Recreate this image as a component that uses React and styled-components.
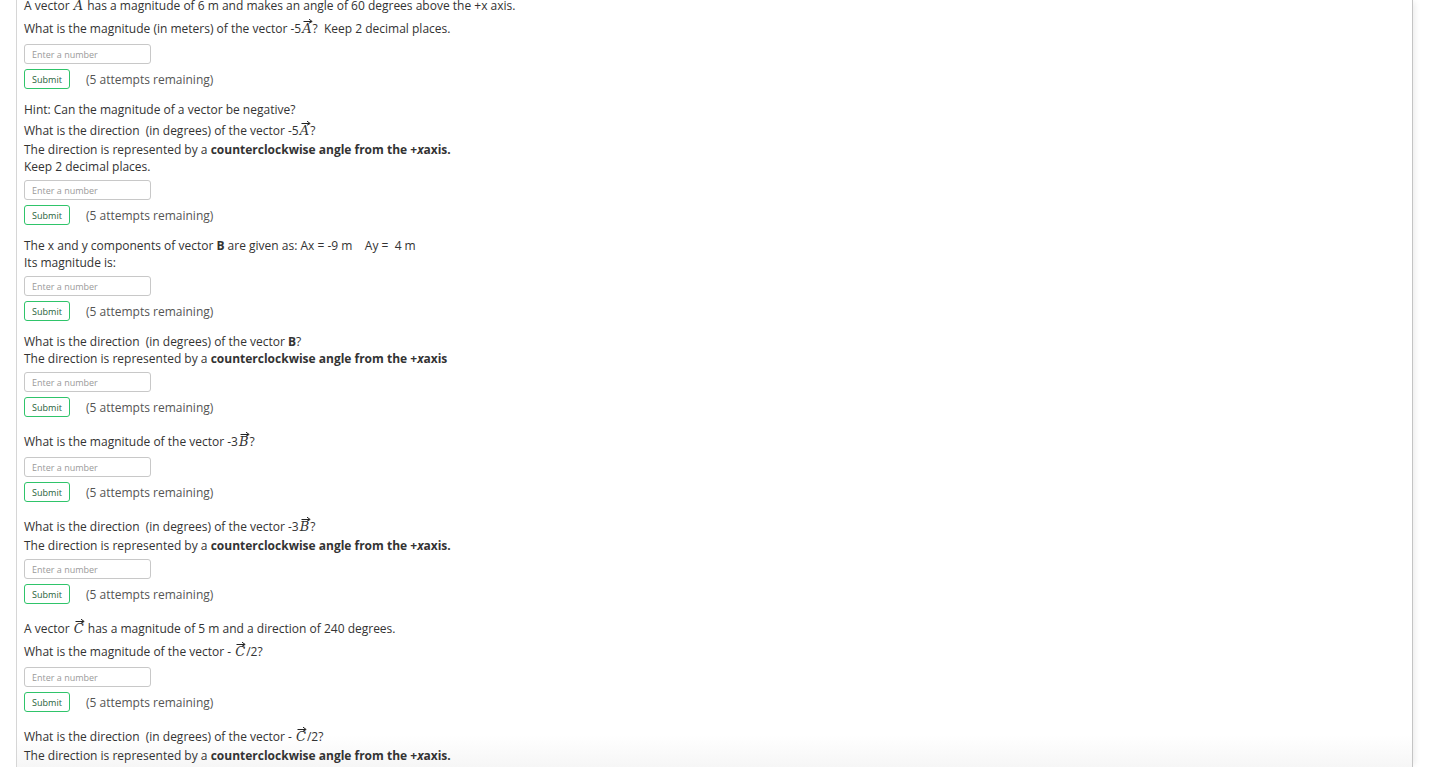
import React from "react"
import styled, { createGlobalStyle } from "styled-components"

const GlobalStyle = createGlobalStyle`
  html, body {
    margin: 0;
    padding: 0;
    background: #ffffff;
    overflow: hidden;
  }
  body {
    font-family: "Open Sans", "Liberation Sans", sans-serif;
    color: #333333;
  }
`

const Page = styled.div`
  height: 767px;
  width: 1432px;
  overflow: hidden;
  background: #ffffff;
`

const Panel = styled.div`
  margin-left: 16px;
  width: 1397px;
  height: 767px;
  border-left: 1px solid #d6d6d6;
  border-right: 1px solid #c4c4c4;
  box-shadow: 4px 0 6px -2px rgba(0, 0, 0, 0.08);
  background: linear-gradient(to bottom, #ffffff 0, #ffffff 735px, #f6f6f6 767px);
  box-sizing: border-box;
  padding: 0 7px;
  overflow: hidden;
`

const Content = styled.div`
  margin-top: -3.5px;
`

const Block = styled.div`
  margin-bottom: 11.5px;
`

const Line = styled.div`
  font-size: 12px;
  line-height: 17px;
  height: 17px;
  white-space: pre;
  padding-top: ${props => (props.math ? "4px" : "0")};
  padding-bottom: ${props => (props.math ? "2px" : "0")};
  margin-bottom: ${props => props.gap || 0}px;
`

const Strong = styled.b`
  font-weight: 700;
`

const Ital = styled.i`
  font-style: italic;
`

const MathVar = styled.span`
  position: relative;
  display: inline-block;
  font-family: "DejaVu Serif", "Liberation Serif", serif;
  font-style: italic;
  font-size: 13px;
  line-height: 12px;
  padding: 0 1px;
`

const Arrow = styled.svg`
  position: absolute;
  left: 2px;
  top: -5px;
  width: 10px;
  height: 6px;
`

const Input = styled.input`
  display: block;
  width: 127px;
  height: 20px;
  box-sizing: border-box;
  border: 1px solid #c8c8c8;
  border-radius: 3px;
  padding: 0 7px;
  margin-top: 5.5px;
  font-family: "Open Sans", "Liberation Sans", sans-serif;
  font-size: 9px;
  color: #333;
  outline: none;
  &::placeholder {
    color: #9a9a9a;
  }
`

const SubmitRow = styled.div`
  display: flex;
  align-items: center;
  gap: 16px;
  margin-top: 5px;
  height: 20px;
`

const SubmitButton = styled.button`
  width: 46px;
  height: 20px;
  box-sizing: border-box;
  border: 1.5px solid #2fc46a;
  border-radius: 3px;
  background: #ffffff;
  color: #1f5f3a;
  font-family: "Open Sans", "Liberation Sans", sans-serif;
  font-size: 9px;
  padding: 0;
  cursor: pointer;
`

const Attempts = styled.span`
  font-size: 12px;
  color: #555555;
`

const Vec = ({ children }) => (
  <MathVar>
    {children}
    <Arrow viewBox="0 0 10 6">
      <path d="M0.5 3.5 H8.5" stroke="#222" strokeWidth="1" fill="none" />
      <path d="M6 1.2 L9.2 3.5 L6 5.2" stroke="#222" strokeWidth="1" fill="none" />
    </Arrow>
  </MathVar>
)

const Answer = () => (
  <>
    <Input placeholder="Enter a number" />
    <SubmitRow>
      <SubmitButton>Submit</SubmitButton>
      <Attempts>(5 attempts remaining)</Attempts>
    </SubmitRow>
  </>
)

const Direction = ({ dot = true }) => (
  <Line>
    The direction is represented by a{" "}
    <Strong>
      counterclockwise angle from the +<Ital>x</Ital>axis{dot ? "." : ""}
    </Strong>
  </Line>
)

export default function App() {
  return (
    <Page>
      <GlobalStyle />
      <Panel>
        <Content>
          <Block>
            <Line gap={2}>
              A vector <MathVar>A</MathVar> has a magnitude of 6 m and makes an angle of 60 degrees above the +x axis.
            </Line>
            <Line math>
              What is the magnitude (in meters) of the vector -5<Vec>A</Vec>?  Keep 2 decimal places.
            </Line>
            <Answer />
          </Block>

          <Block>
            <Line>Hint: Can the magnitude of a vector be negative?</Line>
            <Line math>
              What is the direction  (in degrees) of the vector -5<Vec>A</Vec>?
            </Line>
            <Direction />
            <Line>Keep 2 decimal places.</Line>
            <Answer />
          </Block>

          <Block>
            <Line>
              The x and y components of vector <Strong>B</Strong> are given as: Ax = -9 m    Ay =  4 m
            </Line>
            <Line>Its magnitude is:</Line>
            <Answer />
          </Block>

          <Block>
            <Line>
              What is the direction  (in degrees) of the vector <Strong>B</Strong>?
            </Line>
            <Direction dot={false} />
            <Answer />
          </Block>

          <Block>
            <Line math>
              What is the magnitude of the vector -3<Vec>B</Vec>?
            </Line>
            <Answer />
          </Block>

          <Block>
            <Line math>
              What is the direction  (in degrees) of the vector -3<Vec>B</Vec>?
            </Line>
            <Direction />
            <Answer />
          </Block>

          <Block>
            <Line math>
              A vector <Vec>C</Vec> has a magnitude of 5 m and a direction of 240 degrees.
            </Line>
            <Line math>
              What is the magnitude of the vector - <Vec>C</Vec>/2?
            </Line>
            <Answer />
          </Block>

          <Block>
            <Line math>
              What is the direction  (in degrees) of the vector - <Vec>C</Vec>/2?
            </Line>
            <Direction />
          </Block>
        </Content>
      </Panel>
    </Page>
  )
}
